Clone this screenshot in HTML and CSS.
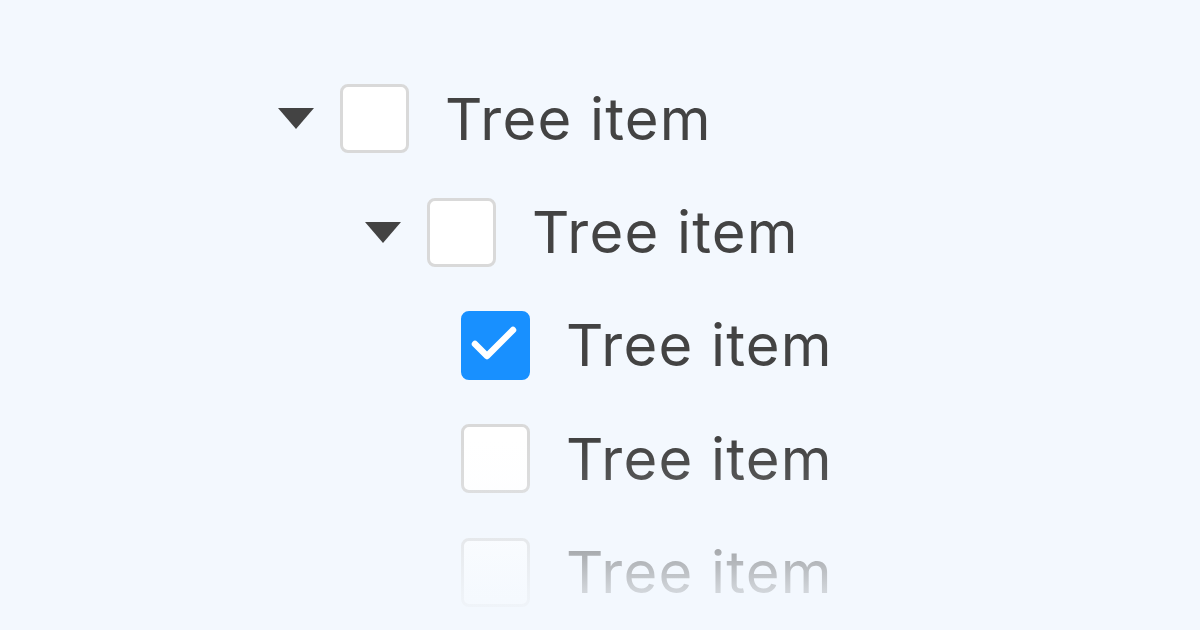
FILE: index.html
```html
<!DOCTYPE html>
<html>
<head>
<meta charset="utf-8">
<link rel="stylesheet" href="styles.css">
</head>
<body>
<div class="tree">
  <div class="row lvl1">
    <svg class="caret" viewBox="0 0 36 21"><polygon points="0,0 36,0 18,21"/></svg>
    <span class="box"></span>
    <span class="label">Tree item</span>
  </div>
  <div class="row lvl2">
    <svg class="caret" viewBox="0 0 36 21"><polygon points="0,0 36,0 18,21"/></svg>
    <span class="box"></span>
    <span class="label">Tree item</span>
  </div>
  <div class="row lvl3">
    <span class="box checked">
      <svg viewBox="0 0 69 69"><polyline points="14,33 26,45 52,19"/></svg>
    </span>
    <span class="label">Tree item</span>
  </div>
  <div class="row lvl3">
    <span class="box"></span>
    <span class="label">Tree item</span>
  </div>
  <div class="row lvl3">
    <span class="box"></span>
    <span class="label">Tree item</span>
  </div>
  <div class="fade"></div>
</div>
</body>
</html>
```
FILE: styles.css
```css
html, body {
  margin: 0;
  padding: 0;
}
body {
  width: 1200px;
  height: 630px;
  overflow: hidden;
  background: #f3f8fe;
  font-family: Inter, "Noto Sans", sans-serif;
  color: #434343;
}
.tree {
  position: relative;
  height: 630px;
  padding-top: 62px;
  box-sizing: border-box;
  display: flex;
  flex-direction: column;
}
.row {
  height: 113.4px;
  display: flex;
  align-items: center;
  flex-shrink: 0;
}
.row > * { flex-shrink: 0; }
.lvl1 { padding-left: 278px; }
.lvl2 { padding-left: 365px; }
.lvl3 { padding-left: 461px; }
.caret {
  width: 36px;
  height: 21px;
  margin-right: 26px;
  fill: #434343;
}
.box {
  width: 69px;
  height: 69px;
  box-sizing: border-box;
  border: 3px solid #d9d9d9;
  border-radius: 8px;
  background: #ffffff;
  display: flex;
}
.box.checked {
  background: #1890ff;
  border-color: #1890ff;
}
.box.checked svg {
  width: 69px;
  height: 69px;
  margin: -3px;
}
.box.checked polyline {
  fill: none;
  stroke: #ffffff;
  stroke-width: 6.5;
  stroke-linecap: round;
  stroke-linejoin: round;
}
.label {
  margin-left: 36px;
  font-size: 58px;
  line-height: 1;
  letter-spacing: 1.2px;
}
.fade {
  position: absolute;
  left: 0;
  right: 0;
  top: 440px;
  height: 190px;
  background: linear-gradient(to bottom,
    rgba(243,248,254,0) 0px,
    rgba(243,248,254,0.1) 40px,
    rgba(243,248,254,0.57) 110px,
    rgba(243,248,254,0.8) 150px,
    rgba(243,248,254,0.95) 190px);
  pointer-events: none;
}
```
